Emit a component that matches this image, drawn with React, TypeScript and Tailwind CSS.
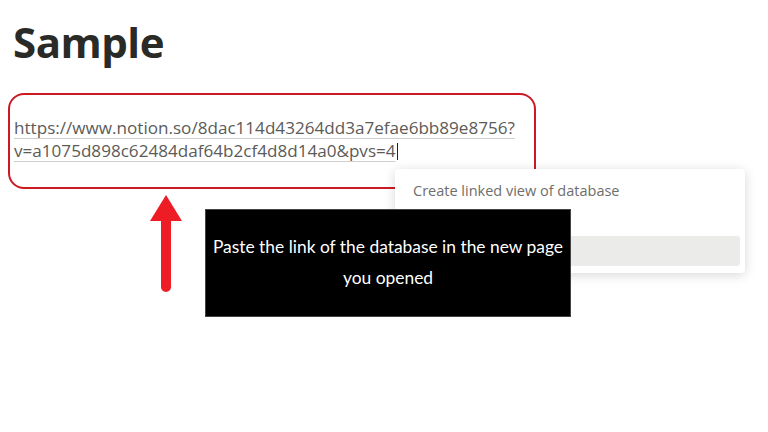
export default function App() {
  return (
    <div className="relative h-[432px] w-[768px] overflow-hidden bg-white font-['Open_Sans',sans-serif]">
      <div className="px-[13px] pt-[14px]">
        <h1 className="text-[42px] leading-[56px] font-bold tracking-[-0.5px] text-[#2a2a27]">Sample</h1>

        {/* pasted link, circled */}
        <div className="mt-[23px] -ml-[5px] w-[528px] rounded-[16px] border-2 border-[#cc1a22] px-[4px] pt-[21px] pb-[25px]">
          <p className="text-[17.1px] leading-[23px] text-[#5b5b58]">
            <span className="underline decoration-[#cfcfcd] decoration-1 underline-offset-[4px]">
              https://www.notion.so/8dac114d43264dd3a7efae6bb89e8756?
              <br />
              v=a1075d898c62484daf64b2cf4d8d14a0&amp;pvs=4
            </span>
            <span className="ml-[1px] inline-block h-[17px] w-px translate-y-[3px] bg-[#222]" />
          </p>
        </div>
      </div>

      {/* link menu */}
      <div className="absolute top-[169px] left-[395px] h-[104px] w-[350px] rounded-[4px] bg-white shadow-[0_2px_12px_rgba(0,0,0,0.16)]">
        <div className="px-[18px] pt-[11px] text-[14.5px] text-[#6e6e6b]">Create linked view of database</div>
        <div className="absolute top-[67px] left-[5px] h-[30px] w-[340px] rounded-[3px] bg-[#ebebea]" />
      </div>

      {/* arrow */}
      <svg className="absolute top-[194px] left-[150px]" width="34" height="100" viewBox="0 0 34 100">
        <path d="M16 1 L32 27 L0 27 Z" fill="#ee1c25" />
        <line x1="16" y1="24" x2="16" y2="93" stroke="#ee1c25" strokeWidth="10" strokeLinecap="round" />
      </svg>

      {/* caption */}
      <div className="absolute top-[209px] left-[205px] flex h-[108px] w-[366px] flex-col items-center justify-center border border-[#444] bg-black pb-[2px] font-['Lato',sans-serif] text-[17.4px] leading-[31px] text-white">
        <span>Paste the link of the database in the new page</span>
        <span>you opened</span>
      </div>
    </div>
  );
}
